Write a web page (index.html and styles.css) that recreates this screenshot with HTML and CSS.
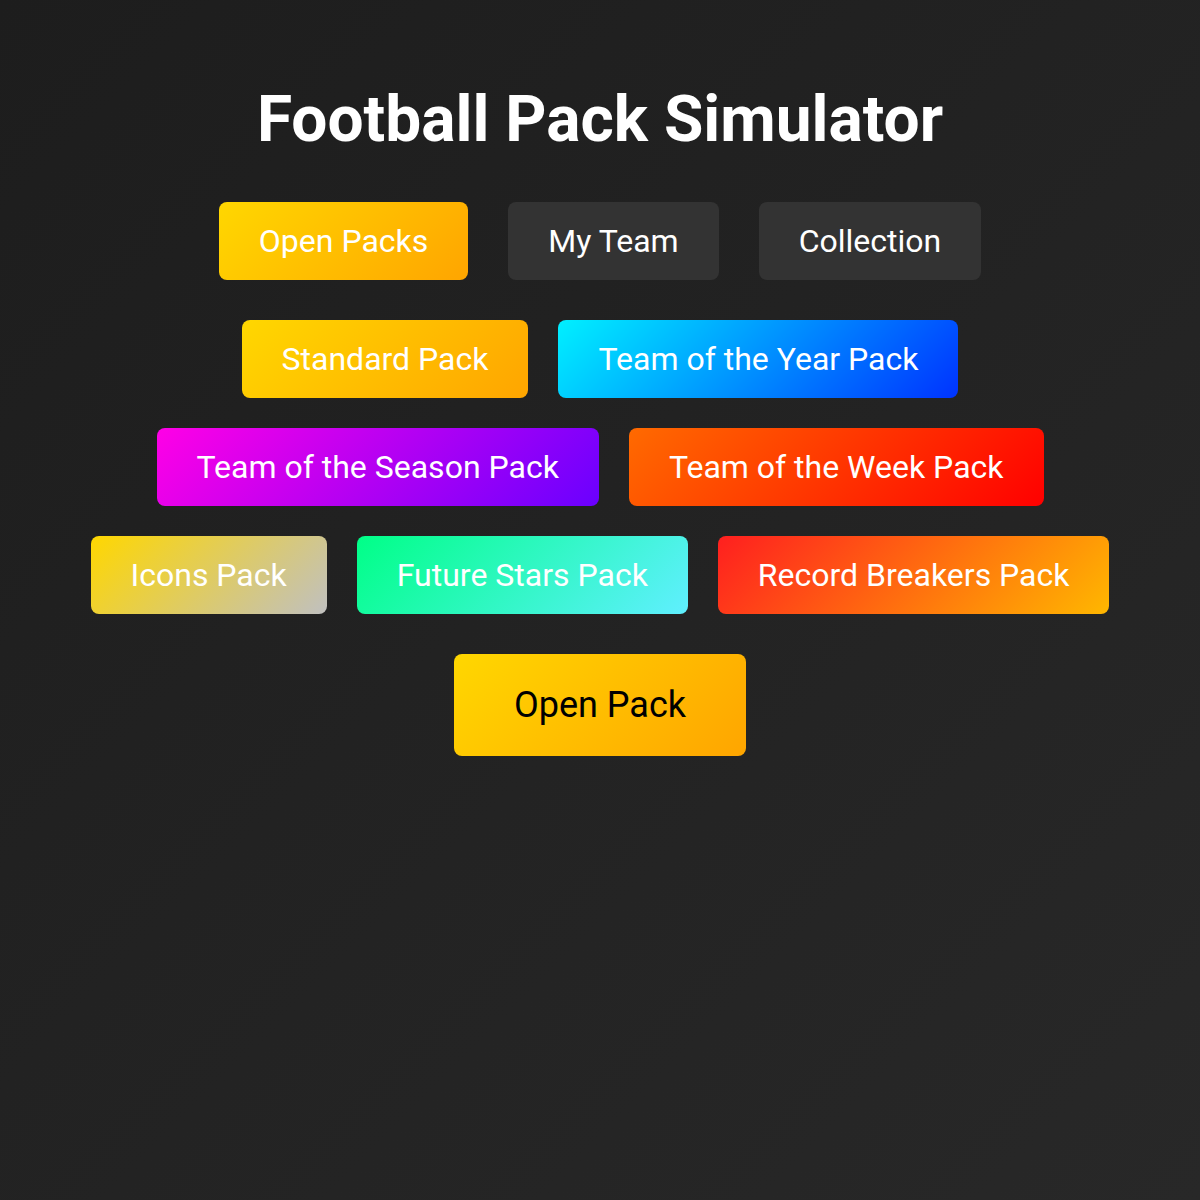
FILE: index.html
```html
<!DOCTYPE html>
<html lang="en">
<head>
<meta charset="utf-8">
<title>Football Pack Simulator</title>
<link rel="stylesheet" href="styles.css">
</head>
<body>
<div class="app">
  <h1 class="title">Football Pack Simulator</h1>
  <nav class="nav">
    <button class="btn nav-btn active">Open Packs</button>
    <button class="btn nav-btn">My Team</button>
    <button class="btn nav-btn">Collection</button>
  </nav>
  <div class="packs">
    <button class="btn pack standard">Standard Pack</button>
    <button class="btn pack toty">Team of the Year Pack</button>
    <button class="btn pack tots">Team of the Season Pack</button>
    <button class="btn pack totw">Team of the Week Pack</button>
    <button class="btn pack icons">Icons Pack</button>
    <button class="btn pack future">Future Stars Pack</button>
    <button class="btn pack record">Record Breakers Pack</button>
  </div>
  <div class="open-wrap">
    <button class="btn open-btn">Open Pack</button>
  </div>
</div>
</body>
</html>
```
FILE: styles.css
```css
* { box-sizing: border-box; }
html, body {
  margin: 0;
  min-height: 100%;
}
body {
  min-height: 1200px;
  background: linear-gradient(135deg, #1d1d1d 0%, #282828 100%);
  font-family: Roboto, "Liberation Sans", sans-serif;
  color: #fff;
}
.app {
  display: flex;
  flex-direction: column;
  align-items: center;
  padding: 82px 20px 40px;
}
.title {
  margin: 0 0 45px;
  font-size: 64px;
  font-weight: 700;
  line-height: 75px;
  color: #fff;
}
.btn {
  border: none;
  border-radius: 8px;
  font-family: Roboto, "Liberation Sans", sans-serif;
  font-size: 32px;
  line-height: 38px;
  color: #fff;
  padding: 20px 40px;
  cursor: pointer;
}
.nav {
  display: flex;
  gap: 40px;
  margin-bottom: 25px;
}
.nav-btn { background: #333333; }
.nav-btn.active { background: linear-gradient(135deg, #ffd700, #ffa500); }
.packs {
  display: flex;
  flex-wrap: wrap;
  justify-content: center;
  width: 1080px;
}
.pack { margin: 15px; }
.standard { background: linear-gradient(135deg, #ffd700, #ffa500); }
.toty { background: linear-gradient(135deg, #00f0ff, #0033ff); }
.tots { background: linear-gradient(135deg, #ff00e6, #6a00ff); }
.totw { background: linear-gradient(135deg, #ff6a00, #ff0000); }
.icons { background: linear-gradient(135deg, #ffd700, #c0c0c0); }
.future { background: linear-gradient(135deg, #00ff87, #60efff); }
.record { background: linear-gradient(135deg, #ff1f1f, #ffb700); }
.open-wrap {
  margin-top: 25px;
  display: flex;
  justify-content: center;
}
.open-btn {
  background: linear-gradient(135deg, #ffd700, #ffa500);
  color: #000;
  font-size: 36px;
  line-height: 42px;
  padding: 30px 60px;
}
```
